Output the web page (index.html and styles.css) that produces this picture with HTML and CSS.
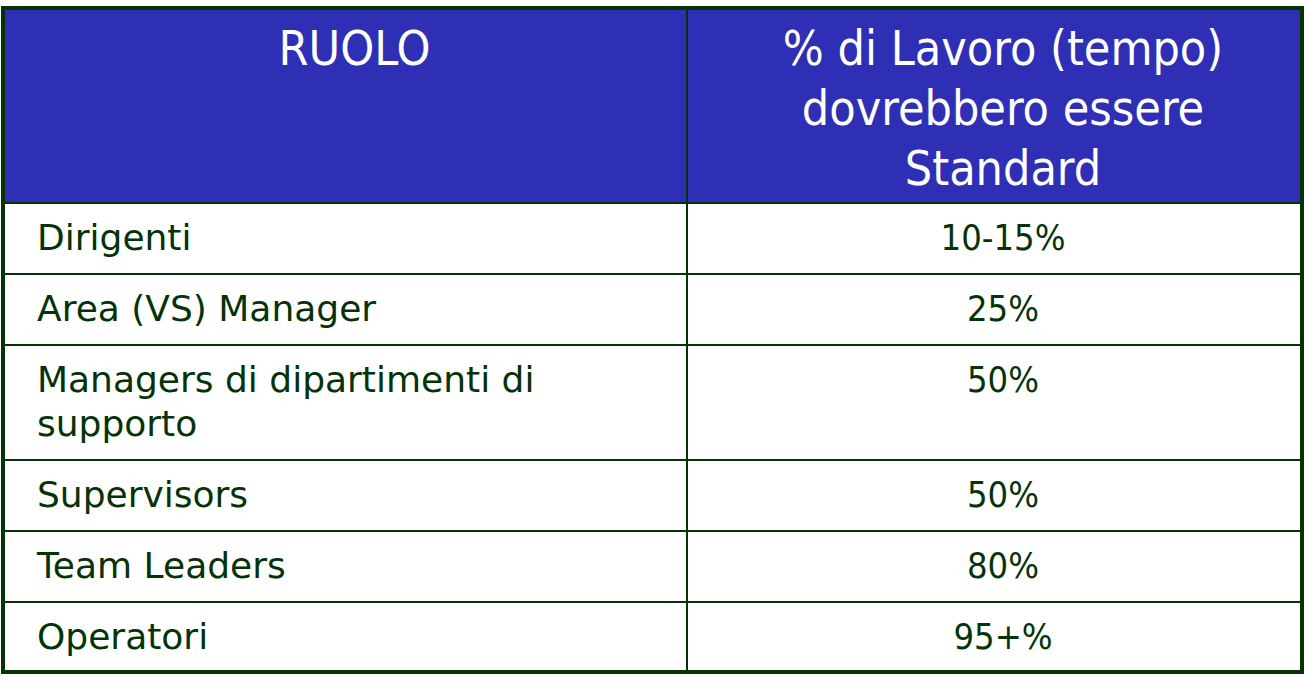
FILE: index.html
```html
<!DOCTYPE html>
<html lang="it">
<head>
<meta charset="utf-8">
<title>Ruolo - Lavoro Standard</title>
<link rel="stylesheet" href="styles.css">
</head>
<body>
<table class="grid">
  <thead>
    <tr>
      <th class="c1">RUOLO</th>
      <th class="c2">% di Lavoro (tempo)<br>dovrebbero essere<br>Standard</th>
    </tr>
  </thead>
  <tbody>
    <tr><td class="c1">Dirigenti</td><td class="c2">10-15%</td></tr>
    <tr><td class="c1">Area (VS) Manager</td><td class="c2">25%</td></tr>
    <tr><td class="c1">Managers di dipartimenti di<br>supporto</td><td class="c2">50%</td></tr>
    <tr><td class="c1">Supervisors</td><td class="c2">50%</td></tr>
    <tr><td class="c1">Team Leaders</td><td class="c2">80%</td></tr>
    <tr class="last"><td class="c1">Operatori</td><td class="c2">95+%</td></tr>
  </tbody>
</table>
</body>
</html>
```
FILE: styles.css
```css
html, body {
  margin: 0;
  padding: 0;
  background: #ffffff;
}
.grid {
  box-sizing: border-box;
  margin: 6px 0 0 1px;
  width: 1303px;
  border: 4px solid #053305;
  border-collapse: separate;
  border-spacing: 0;
  table-layout: fixed;
  font-family: "DejaVu Sans", Verdana, sans-serif;
}
.grid th, .grid td {
  box-sizing: border-box;
  padding: 0;
  vertical-align: top;
  border-bottom: 2px solid #053305;
}
.grid .c1 {
  width: 683px;
  border-right: 2px solid #053305;
}
.grid th {
  background: #2f2fb6;
  color: #ffffff;
  font-family: "DejaVu Sans Condensed", "DejaVu Sans", sans-serif;
  font-weight: normal;
  font-size: 48px;
  line-height: 60px;
  text-align: center;
  padding: 8px 0 4px 18px;
}
.grid td {
  color: #053305;
  font-size: 36px;
  line-height: 44px;
  padding: 12px 0 13px 0;
}
.grid td.c1 {
  text-align: left;
  padding-left: 32px;
}
.grid td.c2 {
  text-align: center;
  padding-left: 18px;
  font-family: "DejaVu Sans Condensed", "DejaVu Sans", sans-serif;
}
.grid tr.last td {
  border-bottom: none;
  padding-bottom: 11px;
}
```
